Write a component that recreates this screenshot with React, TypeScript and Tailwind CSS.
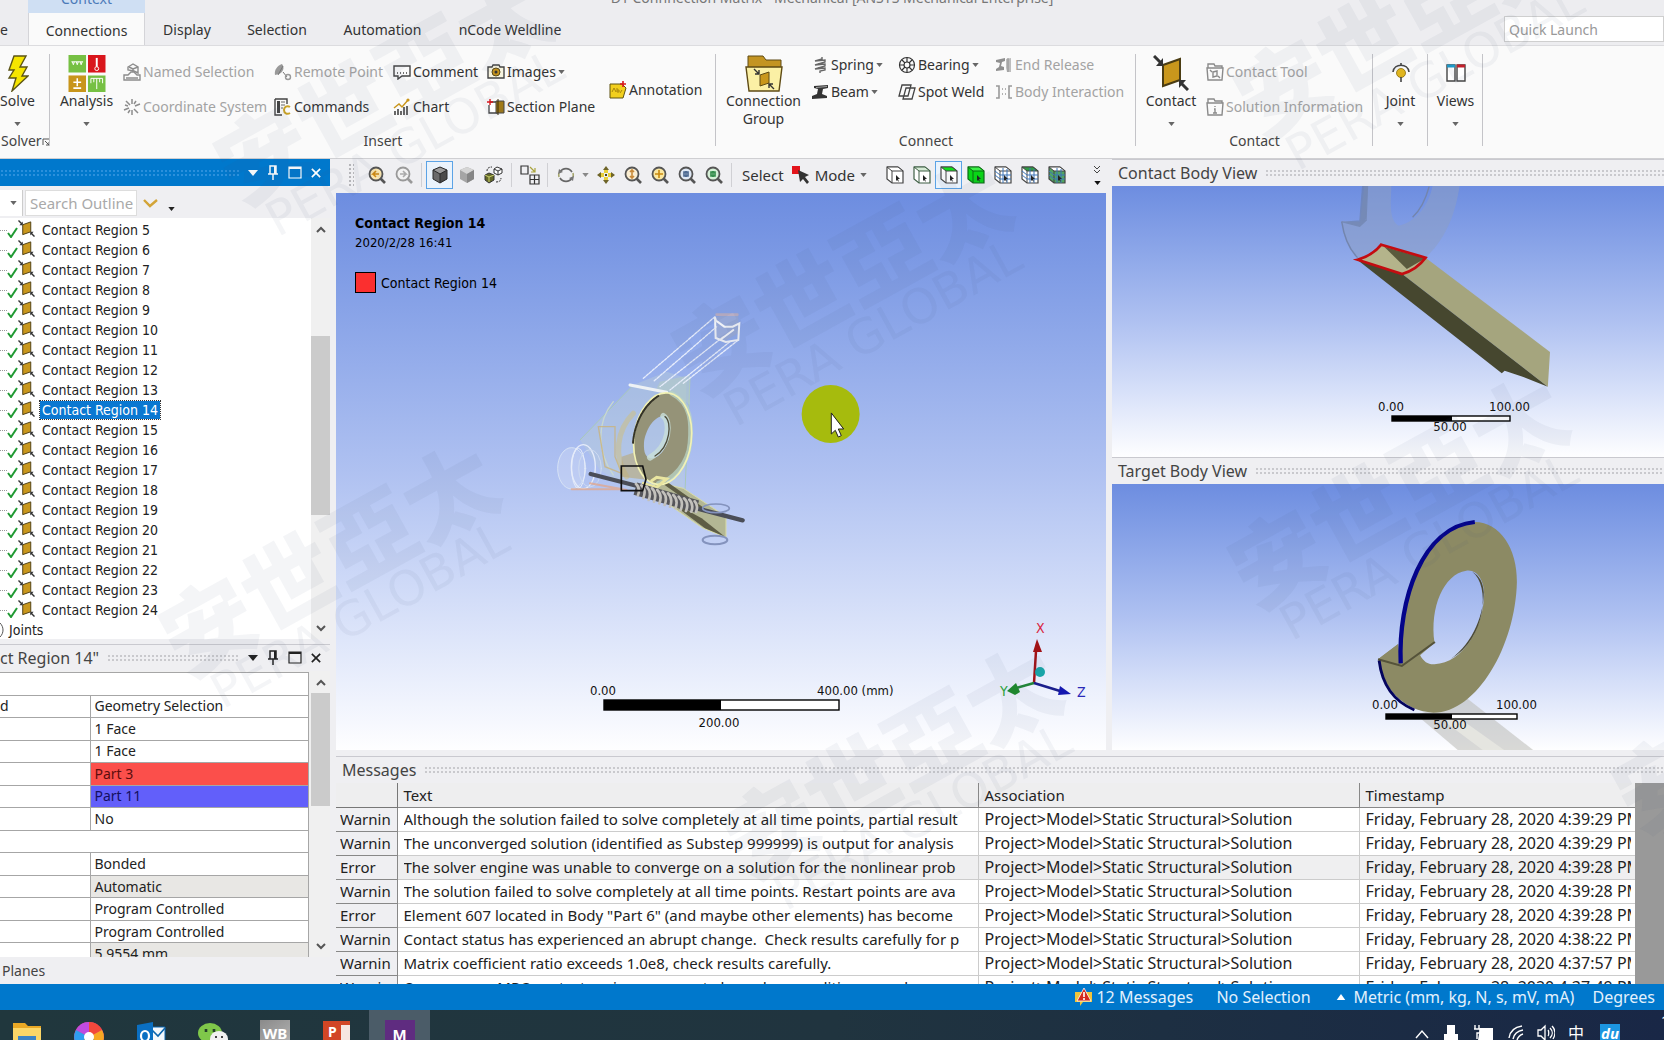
import React from 'react';
import clsx from 'clsx';

type IconProps = { className?: string };

const UI_FONT = 'font-["Noto_Sans","Open_Sans",sans-serif]';
const TAHOMA = 'font-["DejaVu_Sans_Condensed","DejaVu_Sans",sans-serif]';

/* ---------- icons ---------- */

const Caret: React.FC<IconProps> = ({ className = 'text-[#666]' }) => (
  <svg viewBox="0 0 8 5" className={clsx('h-[4px] w-[7px] shrink-0', className)} fill="currentColor">
    <path d="M0 0h8L4 5z" />
  </svg>
);

const BoltIcon = () => (
  <svg viewBox="0 0 22 37" className="h-[37px] w-[22px]">
    <path d="M7 1h12l-6 11h7l-5 9h6L5 36l4-13H2l5-8H2z" fill="#f6e500" stroke="#5b5416" strokeWidth="1.4" />
  </svg>
);

const AnalysisIcon = () => (
  <svg viewBox="0 0 38 38" className="h-[37px] w-[38px]">
    <path d="M0 0h18v18H0zM20 21h18v17H20z" fill="#76c043" />
    <path d="M20 0h18v18H20z" fill="#d9161c" />
    <path d="M0 21h18v17H0z" fill="#c8951a" />
    <path d="M3 7h12M4 7l1 3 1-3m2 0l1 3 1-3m2 0l1 3 1-3" stroke="#fff" fill="none" />
    <path d="M29 3v9" stroke="#fff" strokeWidth="2" />
    <circle cx="29" cy="14" r="2" fill="none" stroke="#fff" />
    <path d="M9 24v8M5 28h8M5 34h8" stroke="#fff" strokeWidth="1.6" />
    <path d="M23 24v5m3-5v4m3-4v11m3-11v4m3-4v5M23 24h12" stroke="#fff" fill="none" />
  </svg>
);

const NamedSelectionIcon = () => (
  <svg viewBox="0 0 18 18" className="size-[18px]" fill="none" stroke="#8c8c8c" strokeWidth="1.4">
    <path d="M1 12h4l3-3h3l3 3h3v5H1z" />
    <path d="M5 4l5-3 5 3v6l-4-2-6-1z" />
    <path d="M6 4l4 2 5-2M10 6v3M3 15h12" />
  </svg>
);

const CoordinateIcon = () => (
  <svg viewBox="0 0 18 18" className="size-[18px]" fill="none" stroke="#8c8c8c" strokeWidth="1.5">
    <path d="M9 1v5M9 12v5M1 12l5-2M12 8l5-2M3 3l4 4M11 11l4 4M2 7l3 1M13 3l-2 3M5 15l2-3" />
  </svg>
);

const RemotePointIcon = () => (
  <svg viewBox="0 0 18 18" className="size-[18px]">
    <path d="M1 12c-1-5 2-9 7-11 3 4 1 8-3 10z" fill="#999" />
    <path d="M4 12l5-9M9 9l4 5" stroke="#777" fill="none" />
    <circle cx="14" cy="14" r="2.5" fill="none" stroke="#999" strokeWidth="1.4" />
  </svg>
);

const CommandsIcon = () => (
  <svg viewBox="0 0 18 18" className="size-[18px]">
    <path d="M1 1h12v5M1 1v16h7" fill="none" stroke="#444" strokeWidth="1.4" />
    <path d="M3 3h3v12H3z" fill="#444" />
    <path d="M7 4h4M7 7h4M7 10h2" stroke="#666" />
    <path d="M16 9c-3-2-6 0-6 3s3 5 6 3" fill="none" stroke="#c9a227" strokeWidth="2" />
  </svg>
);

const CommentIcon = () => (
  <svg viewBox="0 0 18 16" className="h-4 w-[18px]" fill="none" stroke="#444" strokeWidth="1.4">
    <path d="M1 2h16v10H9l-4 3v-3H1z" />
    <path d="M4 9h1m2 0h1m2 0h1m2 0h1" />
  </svg>
);

const ChartIcon = () => (
  <svg viewBox="0 0 18 18" className="size-[18px]" fill="none">
    <path d="M2 17v-4M5 17v-6M8 17v-4M11 17V9M14 17V8" stroke="#444" strokeWidth="1.6" />
    <path d="M1 10l5-4 3 3 6-7" stroke="#c9951a" strokeWidth="1.4" />
    <circle cx="15" cy="2" r="1.6" fill="#c9951a" />
  </svg>
);

const CameraIcon = () => (
  <svg viewBox="0 0 18 16" className="h-4 w-[18px]">
    <path d="M1 3h4l1-2h6l1 2h4v11H1z" fill="#f7f4df" stroke="#444" strokeWidth="1.4" />
    <circle cx="9" cy="8" r="4" fill="#c9951a" stroke="#57481a" />
    <circle cx="9" cy="8" r="1.5" fill="#333" />
  </svg>
);

const SectionPlaneIcon = () => (
  <svg viewBox="0 0 18 16" className="h-4 w-[18px]">
    <path d="M3 3h7v11H2V6" fill="#fff" stroke="#444" strokeWidth="1.3" />
    <path d="M9 2h8v12H9z" fill="#a07a18" stroke="#444" />
    <path d="M11 0v16" stroke="#3a2c08" />
    <path d="M3 0v6M0 3h6" stroke="#d9161c" strokeWidth="1.4" />
  </svg>
);

const AnnotationIcon = () => (
  <svg viewBox="0 0 18 18" className="size-[18px]">
    <path d="M1 3h12l4 4-3 10H1z" fill="#f2cf1d" stroke="#5e5210" />
    <path d="M3 11l2-4 2 4m1-4v4h2V9H8m5 0l-2 3" fill="none" stroke="#a8860d" />
    <path d="M14 0v6M11 3h6" stroke="#d9161c" strokeWidth="1.6" />
  </svg>
);

const ConnectionGroupIcon = () => (
  <svg viewBox="0 0 38 37" className="h-[37px] w-[38px]">
    <path d="M3 13V1h15l3 4h15v8z" fill="#c39422" stroke="#5e4a14" />
    <path d="M1 12h36l-3 24H4z" fill="#fbf0a5" stroke="#5e4a14" strokeWidth="1.4" />
    <path d="M15 20l9-3v11l-9 3z" fill="#c9971c" stroke="#5e4a14" />
    <path d="M9 14l5 5m-4 0h4v-4M29 34l-5-5m4 0h-4v4" stroke="#333" fill="none" strokeWidth="1.4" />
  </svg>
);

const SpringIcon = () => (
  <svg viewBox="0 0 18 18" className="size-[18px]" fill="none" stroke="#666" strokeWidth="1.4">
    <path d="M11 1v2L4 5l10-1v2L4 9l10-1v2L4 13l10-1v2l-5 1v2" />
  </svg>
);

const BeamIcon = ({ className = 'text-[#333]' }: IconProps) => (
  <svg viewBox="0 0 18 16" className={clsx('h-4 w-[18px]', className)} fill="currentColor">
    <path d="M3 2l14-1v3l-5 1-1 5 5 2v2l-15 1v-3l5-2 1-5-4-1z" />
    <path d="M5 3.500L16 2.500" stroke="#bbb" strokeWidth=".8" />
  </svg>
);

const EndReleaseIcon = () => (
  <svg viewBox="0 0 18 16" className="h-4 w-[18px]" fill="#8f8f8f">
    <path d="M1 3l9-2v3l-3 1-1 4 3 1v3l-8 1v-2l3-2 1-4-4-1z" />
    <path d="M11 2l5-1v14h-4l-1-4z" fill="#bdbdbd" />
    <path d="M13 1v14" stroke="#8f8f8f" />
  </svg>
);

const BearingIcon = () => (
  <svg viewBox="0 0 18 18" className="size-[18px]" fill="none" stroke="#333" strokeWidth="1.2">
    <circle cx="9" cy="9" r="7.500" />
    <circle cx="9" cy="9" r="3" />
    <path d="M9 1.500V6M9 12v4.500M1.500 9H6M12 9h4.500M4 4l3 3M11 11l3 3M14 4l-3 3M7 11l-3 3" />
  </svg>
);

const SpotWeldIcon = () => (
  <svg viewBox="0 0 18 16" className="h-4 w-[18px]" fill="none" stroke="#444" strokeWidth="1.3">
    <path d="M4 1h9l-3 11H1zM8 4h9l-3 11H5z" />
  </svg>
);

const BodyInteractionIcon = () => (
  <svg viewBox="0 0 18 16" className="h-4 w-[18px]" fill="none" stroke="#999" strokeWidth="1.6">
    <path d="M1 2h3v12H1M17 2h-3v12h3M7 5h1m2 0h1M7 10h1m2 0h1" />
  </svg>
);

const ContactIcon = ({ className = 'h-[36px] w-[36px]' }: IconProps) => (
  <svg viewBox="0 0 36 36" className={className}>
    <path d="M10 10l17-6v21l-17 6z" fill="#c9971c" stroke="#4a3c12" strokeWidth="2" />
    <path d="M1 1l8 8M35 35l-8-8" stroke="#333" strokeWidth="3" />
    <path d="M10 3v8H3zM26 33v-8h7z" fill="#333" />
  </svg>
);

const ToolFolderIcon = () => (
  <svg viewBox="0 0 18 18" className="size-[18px]" fill="none" stroke="#8a8a8a" strokeWidth="1.4">
    <path d="M2 5V1h6l1 2h7v2M1 5h16l-1 12H2z" />
    <path d="M7 9l4-1v5l-4 1zM4 7l2 2M14 15l-2-2" />
  </svg>
);

const SolutionInfoIcon = () => (
  <svg viewBox="0 0 18 18" className="size-[18px]" fill="none" stroke="#8a8a8a" strokeWidth="1.4">
    <path d="M2 5V1h6l1 2h7v2M1 5h16l-1 12H2z" />
    <path d="M9 8v1M8 11h1v4M7 15h4" />
  </svg>
);

const JointIcon = () => (
  <svg viewBox="0 0 20 20" className="size-5">
    <path d="M2 9c1-9 15-9 16 0M10 0v3" fill="none" stroke="#444" strokeWidth="1.6" />
    <circle cx="10" cy="10" r="4.500" fill="#e0b51e" stroke="#8a6c0c" strokeWidth=".8" />
    <path d="M10 14v5" stroke="#444" strokeWidth="1.6" />
  </svg>
);

const ViewsIcon = () => (
  <svg viewBox="0 0 20 20" className="size-5" fill="#fff" strokeWidth="1.4">
    <path d="M1 2h8v16H1zM11 2h8v16h-8z" stroke="#444" />
    <path d="M1 3h8" stroke="#1e9bc9" strokeWidth="3" />
    <path d="M11 3h8" stroke="#c3202b" strokeWidth="3" />
  </svg>
);

const ZoomIcon: React.FC<{ ring?: string; fill: string; mark: string; d: string }> = ({
  ring = '#555',
  fill,
  mark,
  d,
}) => (
  <svg viewBox="0 0 18 18" className="size-[18px]" fill="none">
    <circle cx="8" cy="8" r="6.500" fill={fill} stroke={ring} strokeWidth="1.8" />
    <path d="M12.500 12.500L17 17" stroke={ring} strokeWidth="2.600" />
    <path d={d} stroke={mark} strokeWidth="1.6" />
  </svg>
);

const SolidCubeIcon: React.FC<{ light?: boolean }> = ({ light }) => (
  <svg viewBox="0 0 16 18" className="h-[18px] w-4">
    <path d="M8 1l7 3v9l-7 4-7-4V4z" fill={light ? '#a5a5a5' : '#6a6a6a'} />
    <path d="M8 1l7 3-7 4-7-4z" fill={light ? '#d5d5d5' : '#9a9a9a'} />
    <path d="M8 8l7-4v9l-7 4z" fill={light ? '#868686' : '#4a4a4a'} />
    {!light && <path d="M8 1l7 3v9l-7 4-7-4V4zM1 4l7 4 7-4M8 8v9" fill="none" stroke="#2a2a2a" />}
  </svg>
);

const ExplodeIcon = () => (
  <svg viewBox="0 0 20 20" className="size-5">
    <path d="M5 8l5 2v5l-5 3-4-3v-5z" fill="#63682a" stroke="#333" />
    <path d="M1 10l4 2 5-2M5 12v5" fill="none" stroke="#cdd36b" />
    <path d="M13 2l5 2v4l-4 2-4-2V4zM10 4l4 2 4-2M14 6v4" fill="#fff" stroke="#333" />
    <path d="M3 6c0-3 2-4 5-4M12 17c3 0 5-1 5-4" fill="none" stroke="#333" strokeDasharray="2 1" />
  </svg>
);

const TileIcon = () => (
  <svg viewBox="0 0 20 20" className="size-5" fill="none" stroke="#333" strokeWidth="1.2">
    <path d="M1 1h7v8H1zM10 10h9v9h-9zM10 14.500h9M14.500 10v9" />
    <path d="M10 2l5 5m-4 0h4V3" stroke="#a9a33c" />
  </svg>
);

const RotateIcon = () => (
  <svg viewBox="0 0 18 18" className="size-[18px]" fill="none" strokeWidth="1.6">
    <path d="M3 6a7 7 0 0 1 12 0M15 12a7 7 0 0 1-12 0" stroke="#666" />
    <path d="M2 7a7 7 0 0 0 0 4M16 7a7 7 0 0 1 0 4" stroke="#a5a56c" />
    <path d="M1 8l1-5 4 3zM17 10l-1 5-4-3z" fill="#777" stroke="none" />
  </svg>
);

const PanIcon = () => (
  <svg viewBox="0 0 18 18" className="size-[18px]">
    <path d="M9 0l3 4H6zM9 18l3-4H6zM0 9l4-3v6zM18 9l-4-3v6z" fill="#6e6428" />
    <path d="M7 4h4v3H7zM7 11h4v3H7zM4 7h3v4H4zM11 7h3v4h-3z" fill="#e9cf3a" />
    <path d="M8 8h2v2H8z" fill="#4a4320" />
  </svg>
);

const ModeIcon = () => (
  <svg viewBox="0 0 18 18" className="size-[18px]">
    <path d="M0 0h8v8H0z" fill="#e3141b" />
    <path d="M6 4l11 5-4 2 4 5-2 2-4-5-3 3z" fill="#333" />
  </svg>
);

const SelectCubeIcon: React.FC<{ face?: string; top?: string; edge?: string; mesh?: boolean }> = ({
  face = '#fff',
  top = '#fff',
  edge = '#444',
  mesh,
}) => (
  <svg viewBox="0 0 18 18" className="size-[18px]" fill="none">
    <path d="M1 1h11l5 4v12H6l-5-4z" fill={face} stroke={edge} strokeWidth="1.2" />
    <path d="M1 1h11l5 4H6z" fill={top} stroke={edge} />
    <path d="M6 5v12" stroke={edge} />
    {mesh && <path d="M9 2v15M13 3v14M1 5l5 4h11M1 9l5 4h11" stroke="#3d74b8" />}
    <path d="M10 9l4 4h-2l1 3-2-2-1 1z" fill="#222" />
  </svg>
);

const PinIcon = () => (
  <svg viewBox="0 0 12 16" className="h-4 w-3" fill="none" stroke="currentColor" strokeWidth="1.5">
    <path d="M3 1h6v8H3zM1 9h10M6 9v6" />
    <path d="M8 1v8" strokeWidth="2" />
  </svg>
);

const CheckIcon = () => (
  <svg viewBox="0 0 11 12" className="mt-1 h-3 w-[11px]" fill="none">
    <path d="M1 7l3 4 6-9" stroke="#219a34" strokeWidth="2" />
  </svg>
);

const ChevronIcon: React.FC<{ down?: boolean; className?: string }> = ({ down, className = 'text-[#555]' }) => (
  <svg viewBox="0 0 10 7" className={clsx('h-[7px] w-[10px]', className)} fill="none" stroke="currentColor" strokeWidth="2">
    <path d={down ? 'M1 1l4 4 4-4' : 'M1 6l4-4 4 4'} />
  </svg>
);

/* ---------- ribbon ---------- */

interface SmallButtonProps {
  icon: React.ReactNode;
  label: string;
  disabled?: boolean;
  menu?: boolean;
  compact?: boolean;
}

const SmallButton: React.FC<SmallButtonProps> = ({ icon, label, disabled, menu, compact }) => (
  <button
    type="button"
    disabled={disabled}
    className={clsx(
      'flex items-center gap-[2px] text-[14px] whitespace-nowrap',
      compact ? 'h-[27px]' : 'h-[35px]',
      disabled ? 'text-[#a3a3a3]' : 'text-[#333]'
    )}
  >
    {icon}
    <span>{label}</span>
    {menu && <Caret />}
  </button>
);

const BigButton: React.FC<{ icon: React.ReactNode; label: string; menu?: boolean; className: string }> = ({
  icon,
  label,
  menu = true,
  className,
}) => (
  <button type="button" className={clsx('flex shrink-0 flex-col items-center text-[14px] text-[#333]', className)}>
    <span className="flex h-[38px] items-center">{icon}</span>
    <span className="leading-[18px]">{label}</span>
    {menu && <Caret className="mt-3 text-[#666]" />}
  </button>
);

interface RibbonGroupProps {
  label: string;
  className: string;
  launcher?: boolean;
  children: React.ReactNode;
}

const RibbonGroup: React.FC<RibbonGroupProps> = ({ label, className, launcher, children }) => (
  <section className={clsx('relative flex shrink-0 flex-col pt-2', className)}>
    <div className="flex flex-1">{children}</div>
    <h2 className={clsx('flex h-[26px] text-[14px] leading-[18px] text-[#444]', launcher ? 'pl-px' : 'justify-center')}>
      {label}
      {launcher && (
        <svg viewBox="0 0 8 8" className="mt-[6px] size-2 shrink-0" fill="none" stroke="#555">
          <path d="M1 7V1h6M3 3l4 4M7 4v3H4" />
        </svg>
      )}
    </h2>
    <i className="absolute top-2 right-0 bottom-3 w-px bg-[#c4c4c8]" />
  </section>
);

const Ribbon = () => (
  <div className="flex h-[113px] shrink-0 overflow-hidden border-b border-[#cfcfd2] bg-[#fafafa]">
    <RibbonGroup label="Solver" launcher className="w-[50px]">
      <BigButton icon={<BoltIcon />} label="Solve" className="w-[35px]" />
    </RibbonGroup>
    <RibbonGroup label="Insert" className="w-[666px]">
      <BigButton icon={<AnalysisIcon />} label="Analysis" className="w-[73px]" />
      <div className="w-[151px]">
        <SmallButton icon={<NamedSelectionIcon />} label="Named Selection" disabled />
        <SmallButton icon={<CoordinateIcon />} label="Coordinate System" disabled />
      </div>
      <div className="w-[119px]">
        <SmallButton icon={<RemotePointIcon />} label="Remote Point" disabled />
        <SmallButton icon={<CommandsIcon />} label="Commands" />
      </div>
      <div className="w-[94px]">
        <SmallButton icon={<CommentIcon />} label="Comment" />
        <SmallButton icon={<ChartIcon />} label="Chart" />
      </div>
      <div className="w-[122px]">
        <SmallButton icon={<CameraIcon />} label="Images" menu />
        <SmallButton icon={<SectionPlaneIcon />} label="Section Plane" />
      </div>
      <div className="flex h-[71px] items-center">
        <SmallButton icon={<AnnotationIcon />} label="Annotation" />
      </div>
    </RibbonGroup>
    <RibbonGroup label="Connect" className="w-[420px]">
      <BigButton icon={<ConnectionGroupIcon />} label="Connection Group" menu={false} className="w-[95px]" />
      <div className="-mt-[3px] w-[87px]">
        <SmallButton icon={<SpringIcon />} label="Spring" menu compact />
        <SmallButton icon={<BeamIcon />} label="Beam" menu compact />
      </div>
      <div className="-mt-[3px] w-[97px]">
        <SmallButton icon={<BearingIcon />} label="Bearing" menu compact />
        <SmallButton icon={<SpotWeldIcon />} label="Spot Weld" compact />
      </div>
      <div className="-mt-[3px]">
        <SmallButton icon={<EndReleaseIcon />} label="End Release" disabled compact />
        <SmallButton icon={<BodyInteractionIcon />} label="Body Interaction" disabled compact />
      </div>
    </RibbonGroup>
    <RibbonGroup label="Contact" className="w-[237px]">
      <BigButton icon={<ContactIcon />} label="Contact" className="w-[70px]" />
      <div>
        <SmallButton icon={<ToolFolderIcon />} label="Contact Tool" disabled />
        <SmallButton icon={<SolutionInfoIcon />} label="Solution Information" disabled />
      </div>
    </RibbonGroup>
    <RibbonGroup label="" className="w-[55px]">
      <BigButton icon={<JointIcon />} label="Joint" className="w-full" />
    </RibbonGroup>
    <RibbonGroup label="" className="w-[55px]">
      <BigButton icon={<ViewsIcon />} label="Views" className="w-full" />
    </RibbonGroup>
  </div>
);

const tabs = [
  { label: 'Display', width: 'w-[84px]' },
  { label: 'Selection', width: 'w-[96px]' },
  { label: 'Automation', width: 'w-[115px]' },
  { label: 'nCode Weldline', width: 'w-[140px]' },
];

const TabStrip = () => (
  <header className="relative flex h-[46px] shrink-0 items-end overflow-hidden border-b border-[#dcdcdf] bg-[#ededf0] text-[14px] text-[#333]">
    <p className="absolute -top-3 left-0 w-full text-center leading-5 text-[#777]">
      D1 Connnection Matrix - Mechanical [ANSYS Mechanical Enterprise]
    </p>
    <button type="button" className="h-[31px] w-[28px] pr-5 text-right">e</button>
    <div className="relative flex h-full w-[117px] flex-col">
      <span className="flex h-[13px] items-end justify-center overflow-hidden bg-[#cfdff3] pb-[5px] leading-[18px] text-[#4c7ab8]">
        Context
      </span>
      <button type="button" className="flex-1 border-x border-[#d4d4d8] bg-[#fafafa] pt-[2px]">Connections</button>
    </div>
    {tabs.map((tab) => (
      <button key={tab.label} type="button" className={clsx('h-[31px]', tab.width)}>
        {tab.label}
      </button>
    ))}
    <input
      type="text"
      aria-label="Quick Launch"
      placeholder="Quick Launch"
      className="mb-[3px] ml-auto h-[26px] w-[160px] border border-[#cfcfcf] bg-white px-1 placeholder:text-[#999]"
    />
  </header>
);

/* ---------- panels ---------- */

const PanelHeader: React.FC<{ title?: string; active?: boolean; controls?: boolean }> = ({ title, active, controls }) => (
  <div
    className={clsx(
      'flex h-[27px] shrink-0 items-center text-[16px]',
      active ? 'bg-[#0078cc] text-white' : 'border-t border-[#c9c9cf] bg-[#efeff2] pb-px text-[#444]'
    )}
  >
    {title && (
      <h3 className={clsx('mr-2 leading-5 whitespace-nowrap', controls ? '' : 'ml-[6px]')}>{title}</h3>
    )}
    <i
      className={clsx(
        'h-2 flex-1 bg-[length:4px_4px]',
        active
          ? 'bg-[radial-gradient(#2b90dc_1px,transparent_1px)]'
          : 'bg-[radial-gradient(#c9c9cd_1px,transparent_1px)]'
      )}
    />
    {controls && (
      <div className={clsx('flex items-center gap-[9px] pr-[9px] pl-2', active ? 'text-white' : 'text-[#222]')}>
        <button type="button" aria-label="Window position">
          <svg viewBox="0 0 10 6" className="h-[6px] w-[10px]" fill="currentColor">
            <path d="M0 0h10L5 6z" />
          </svg>
        </button>
        <button type="button" aria-label="Auto hide"><PinIcon /></button>
        <button type="button" aria-label="Maximize">
          <svg viewBox="0 0 14 13" className="h-[13px] w-[14px]" fill="none" stroke="currentColor">
            <path d="M1 1h12v11H1z" strokeWidth="1.2" />
            <path d="M1 2h12" strokeWidth="2" />
          </svg>
        </button>
        <button type="button" aria-label="Close">
          <svg viewBox="0 0 12 12" className="h-3 w-[10px]" fill="none" stroke="currentColor" strokeWidth="2">
            <path d="M1 1l10 10M11 1L1 11" />
          </svg>
        </button>
      </div>
    )}
  </div>
);

const ScrollBar: React.FC<{ thumb: string }> = ({ thumb }) => (
  <div className="flex w-[19px] shrink-0 flex-col items-center bg-[#f0f0f0] pt-px">
    <span className="flex h-[21px] items-center"><ChevronIcon /></span>
    <div className="w-full flex-1">
      <div className={clsx('w-full bg-[#cbcbcb]', thumb)} />
    </div>
    <span className="flex h-[21px] items-center"><ChevronIcon down /></span>
  </div>
);

const regions = Array.from({ length: 20 }, (_, i) => i + 5);

const OutlinePanel = () => (
  <section className="flex min-h-0 flex-1 flex-col">
    <PanelHeader active controls />
    <div className="flex h-8 shrink-0 items-center bg-[#efeff2] pt-[2px]">
      <button type="button" aria-label="Filter type" className="flex h-[26px] w-[23px] items-center justify-end border-r border-[#ccc] bg-white pr-[5px]">
        <Caret />
      </button>
      <input
        type="text"
        aria-label="Search Outline"
        placeholder="Search Outline"
        className="ml-[2px] h-[26px] w-[112px] border border-[#ddd] bg-white pl-1 text-[15px] placeholder:text-[#a9a9a9]"
      />
      <button type="button" aria-label="Expand" className="ml-[6px]">
        <svg viewBox="0 0 15 9" className="h-[9px] w-[15px]" fill="none" stroke="#d3a437" strokeWidth="2.400">
          <path d="M1 1l6 6 7-6" />
        </svg>
      </button>
      <Caret className="mt-3 ml-[10px] text-[#222]" />
    </div>
    <div className="flex min-h-0 flex-1">
      <ul className={clsx('flex-1 overflow-hidden bg-white pt-[2px] text-[14px] text-[#222]', TAHOMA)}>
        {regions.map((n) => (
          <li key={n} className="flex h-5 items-center">
            <i className="h-px w-[7px] shrink-0 border-t border-dotted border-[#999]" />
            <CheckIcon />
            <ContactIcon className="mb-1 h-[17px] w-[17px]" />
            <span
              className={clsx(
                'ml-[5px] px-[2px] leading-[18px]',
                n === 14 && 'bg-[#0a78d1] text-white outline-1 outline-dotted outline-[#333]'
              )}
            >
              Contact Region {n}
            </span>
          </li>
        ))}
        <li className="flex h-5 items-center">
          <svg viewBox="0 0 4 14" className="h-[14px] w-1" fill="none" stroke="#555">
            <path d="M0 0c4 4 4 10 0 14" />
          </svg>
          <span className="ml-[5px]">Joints</span>
        </li>
      </ul>
      <ScrollBar thumb="mt-[96px] h-[179px]" />
    </div>
  </section>
);

interface DetailRow {
  name?: string;
  value?: string;
  tone?: string;
}

const details: DetailRow[] = [
  {},
  { name: 'd', value: 'Geometry Selection' },
  { value: '1 Face' },
  { value: '1 Face' },
  { value: 'Part 3', tone: 'bg-[#fb4f4b] text-[#5b0d0d]' },
  { value: 'Part 11', tone: 'bg-[#625ffa] text-[#14105e]' },
  { value: 'No' },
  {},
  { value: 'Bonded' },
  { value: 'Automatic', tone: 'bg-[#e8e7e4]' },
  { value: 'Program Controlled' },
  { value: 'Program Controlled' },
  { value: '5.9554 mm', tone: 'bg-[#e8e7e4]' },
];

const DetailsPanel = () => (
  <section className="mt-[5px] flex h-[340px] shrink-0 flex-col">
    <PanelHeader title={'ct Region 14"'} controls />
    <div className="flex h-[286px] overflow-hidden">
      <div className="flex-1 overflow-hidden bg-[#f0f0f0] pt-px pr-[2px]">
        <table className="h-[294px] w-full border-collapse bg-white text-[14px] leading-[18px] text-[#222]">
          <tbody>
            {details.map((row, i) =>
              row.value ? (
                <tr key={i}>
                  <td className="w-[90px] border border-l-0 border-[#a6a6a6] p-0">{row.name}</td>
                  <td className={clsx('border border-[#a6a6a6] py-0 pr-0 pl-1', row.tone)}>{row.value}</td>
                </tr>
              ) : (
                <tr key={i}>
                  <td colSpan={2} className="border border-l-0 border-[#a6a6a6] p-0">&nbsp;</td>
                </tr>
              )
            )}
          </tbody>
        </table>
      </div>
      <ScrollBar thumb="h-[113px]" />
    </div>
    <div className="flex flex-1 items-center bg-[#efeff2] pl-[2px] text-[14px] text-[#444]">Planes</div>
  </section>
);

/* ---------- graphics ---------- */

const ToolButton: React.FC<{ label: string; active?: boolean; children: React.ReactNode }> = ({
  label,
  active,
  children,
}) => (
  <button
    type="button"
    aria-label={label}
    className={clsx(
      'flex h-7 w-[27px] shrink-0 items-center justify-center border',
      active ? 'border-[#5ba3e6] bg-[#eaf3fc]' : 'border-transparent'
    )}
  >
    {children}
  </button>
);

const Divider = () => <i className="mx-1 h-6 w-px shrink-0 bg-[#d0d0d4]" />;

const GraphicsToolbar = () => (
  <div className="flex h-[34px] shrink-0 items-center bg-[#efeff2] pb-[2px] pl-3 text-[15px] text-[#333]">
    <i className="mr-[9px] h-6 w-[6px] shrink-0 bg-[radial-gradient(#b5b5b9_1px,transparent_1px)] bg-[length:4px_4px]" />
    <ToolButton label="Previous view"><ZoomIcon fill="#fbe7b0" mark="#d08a10" d="M11 8H5l3-3M5 8l3 3" /></ToolButton>
    <ToolButton label="Next view"><ZoomIcon ring="#999" fill="#f2f2f2" mark="#aaa" d="M5 8h6L8 5M11 8l-3 3" /></ToolButton>
    <Divider />
    <ToolButton label="Shaded with edges" active><SolidCubeIcon /></ToolButton>
    <ToolButton label="Shaded"><SolidCubeIcon light /></ToolButton>
    <ToolButton label="Explode"><ExplodeIcon /></ToolButton>
    <Divider />
    <ToolButton label="Viewports"><TileIcon /></ToolButton>
    <Divider />
    <ToolButton label="Rotate"><RotateIcon /></ToolButton>
    <span className="flex w-[13px] justify-center"><Caret className="text-[#888]" /></span>
    <ToolButton label="Pan"><PanIcon /></ToolButton>
    <ToolButton label="Zoom"><ZoomIcon fill="#fbeed2" mark="#c98a3a" d="M8 4v8M6 6l2-2 2 2M6 10l2 2 2-2" /></ToolButton>
    <ToolButton label="Box zoom"><ZoomIcon fill="#fbe7a0" mark="#c98a10" d="M8 4v8M4 8h8" /></ToolButton>
    <ToolButton label="Fit"><ZoomIcon fill="#dfe8f5" mark="#47658f" d="M6 6h4v4H6zM8 5v6" /></ToolButton>
    <ToolButton label="Fit selection"><ZoomIcon fill="#d6f0d8" mark="#2f8a48" d="M6 6h4v4H6zM8 5v6" /></ToolButton>
    <Divider />
    <span className="ml-[6px]">Select</span>
    <button type="button" className="mr-[14px] ml-2 flex items-center gap-[5px]">
      <ModeIcon />
      Mode
      <Caret />
    </button>
    <ToolButton label="Vertex"><SelectCubeIcon /></ToolButton>
    <ToolButton label="Edge"><SelectCubeIcon top="#d5ead5" edge="#3f5f45" /></ToolButton>
    <ToolButton label="Face" active><SelectCubeIcon top="#0fe01c" /></ToolButton>
    <ToolButton label="Body"><SelectCubeIcon face="#09d516" top="#3bf047" edge="#0c6a14" /></ToolButton>
    <ToolButton label="Node"><SelectCubeIcon mesh /></ToolButton>
    <ToolButton label="Element face"><SelectCubeIcon mesh top="#2f9a45" /></ToolButton>
    <ToolButton label="Element"><SelectCubeIcon mesh face="#51a562" /></ToolButton>
    <button type="button" aria-label="More tools" className="mr-[5px] ml-auto flex flex-col items-center gap-[7px] text-[#444]">
      <svg viewBox="0 0 8 8" className="size-2" fill="none" stroke="currentColor">
        <path d="M1 0l3 3 3-3M1 4l3 3 3-3" />
      </svg>
      <Caret className="text-[#111]" />
    </button>
  </div>
);

const SKY = 'bg-linear-to-b from-[#6d8de0] via-[#afc1f1] to-[#fefeff]';

interface ScaleProps {
  x: number;
  y: number;
  width: number;
  mid: number;
  height: number;
  max: string;
  half: string;
  maxX: number;
  drop: number;
}

const ScaleBar: React.FC<ScaleProps> = ({ x, y, width, mid, height, max, half, maxX, drop }) => (
  <g fontSize="13" fill="#111">
    <rect x={x} y={y} width={width} height={height} fill="#fff" stroke="#000" strokeWidth="1.4" />
    <rect x={x} y={y} width={mid} height={height} fill="#000" />
    <text x={x - 1} y={y - 5} textAnchor="middle">0.00</text>
    <text x={maxX} y={y - 5}>{max}</text>
    <text x={x + mid - 2} y={y + drop} textAnchor="middle">{half}</text>
  </g>
);

const Assembly = () => (
  <g transform="translate(194 97) scale(.3333)" fill="none" strokeLinecap="round">
    {/* translucent housing */}
    <path d="M310 285L150 450l60 90 100 65 150 10 10-350-60-20z" fill="#bcd0d8" fillOpacity=".4" />
    <path d="M310 285l-160 165M480 265l-15 340" stroke="#a9c9b8" strokeWidth="3" />
    <path d="M390 275l90-20v90l-30-20-70-30z" fill="#b4cbc4" fillOpacity=".6" />
    <path d="M250 335c-50 60-50 150 0 220" stroke="#c9d8d0" strokeWidth="4" />
    <path d="M205 410h50v90l20 50-50-20z" stroke="#c9b37c" strokeWidth="4" opacity=".8" />
    <path d="M310 370c-50 50-60 130-20 190" stroke="#cdbf83" strokeWidth="16" opacity=".55" />
    {/* arm */}
    <path d="M555 80L340 265M560 110L370 275M580 140L390 290M600 155L420 300M625 150L460 280" stroke="#e6ecfb" strokeWidth="4" strokeDasharray="8 4" />
    <path d="M555 82l70-12v60l-40 22-28-8z" fill="#9fa9c6" fillOpacity=".5" />
    <path d="M555 82l2 62 30 12 38-6 3-50-20 10h-25l-25-18zM570 150l40-30" stroke="#f0f2f7" strokeWidth="6" />
    <path d="M560 74h62" stroke="#b9aec4" strokeWidth="8" />
    <path d="M300 285l110 22" stroke="#eef2f5" strokeWidth="9" />
    {/* left boss */}
    <ellipse cx="125" cy="535" rx="42" ry="62" stroke="#d6e2f5" strokeWidth="3" fill="#d6e0f5" fillOpacity=".35" />
    <ellipse cx="160" cy="530" rx="36" ry="66" stroke="#e6ecfa" strokeWidth="4" />
    <ellipse cx="145" cy="535" rx="20" ry="60" stroke="#e6ecfa" strokeWidth="3" />
    <ellipse cx="180" cy="535" rx="34" ry="56" stroke="#cddaf0" strokeWidth="3" />
    <path d="M125 598h150M180 580l110 20" stroke="#e0a890" strokeWidth="6" opacity=".8" />
    <path d="M275 500l60-20 20 90-80-10z" fill="#b9a978" fillOpacity=".6" />
    {/* bracket below the ring */}
    <path d="M370 575l90 20 128 85v62l-70-28-130-90z" fill="#b3b794" stroke="#d9dca8" strokeWidth="3" />
    <path d="M425 640l100 75 60 25-70-55-90-50z" fill="#5e5d45" />
    <path d="M400 575l120 85" stroke="#5e5d45" strokeWidth="12" />
    {/* ring */}
    <path
      fillRule="evenodd"
      fill="#959378"
      d="M402 310c48-8 80 40 84 105 3 80-44 162-98 166-48 2-78-50-78-118 2-76 42-146 92-153zM398 378c-30 4-52 46-56 80-2 34 8 50 28 46 30-6 48-50 50-84 0-28-8-44-22-42z"
    />
    <path d="M400 378c22 14 22 90-40 125" stroke="#c9e0d9" strokeWidth="18" opacity=".8" />
    <path d="M405 380c22 16 16 90-30 118" stroke="#4d4c3a" strokeWidth="4" />
    <path d="M425 310c60 30 60 90 55 150s-50 110-95 120" stroke="#b9d4c6" strokeWidth="14" opacity=".75" />
    <ellipse cx="398" cy="446" rx="86" ry="138" transform="rotate(7 398 446)" stroke="#f2f2b4" strokeWidth="5" />
    <path d="M385 318c-44 28-72 84-76 142" stroke="#333226" strokeWidth="6" strokeDasharray="9 3" />
    <path d="M340 580l40 12 30-25-30-5-15 10" stroke="#e9e5a0" strokeWidth="9" />
    {/* spring and rod */}
    <path d="M182 552l140 36" stroke="#4a4d57" strokeWidth="13" />
    <path d="M500 655l138 36" stroke="#4a4d57" strokeWidth="13" />
    <path d="M316 596l186 54" stroke="#55555a" strokeWidth="38" strokeLinecap="butt" />
    <path
      d="M318 582q14 12 6 34M334 586q16 14 6 38M350 590q16 16 6 40M366 595q16 16 6 40M382 600q16 16 6 40M398 605q16 16 6 40M414 610q16 16 6 40M430 615q16 16 6 40M446 620q16 16 6 40M462 625q16 14 6 38M478 629q14 14 6 36M494 634q12 12 4 32"
      stroke="#c3c1bc"
      strokeWidth="8"
    />
    <ellipse cx="558" cy="655" rx="40" ry="13" stroke="#8493bd" strokeWidth="5" />
    <ellipse cx="555" cy="750" rx="37" ry="13" stroke="#8493bd" strokeWidth="6" />
    <path d="M274 528h64l10 40-10 34h-64z" stroke="#111" strokeWidth="5" />
    {/* pointer highlight */}
    <circle cx="902" cy="372" r="87" fill="#a6bb0d" />
    <path d="M904 370v62l12-11 9 20 9-4-9-20h15z" fill="#fff" stroke="#222" strokeWidth="3" />
  </g>
);

const Triad = () => (
  <g strokeWidth="2.500" fontSize="14">
    <path d="M698 490l2-32" stroke="#a11216" />
    <path d="M701 446l5 13h-9z" fill="#a11216" />
    <path d="M698 490l-18 5" stroke="#23863a" />
    <path d="M671 498l9-8 4 9-5 3z" fill="#1c8a2a" />
    <path d="M698 490l26 8" stroke="#1b1f8c" />
    <path d="M735 501l-11-8-2 9z" fill="#1518b0" />
    <circle cx="704" cy="479" r="5" fill="#19a5a8" />
    <text x="700" y="440" fill="#d92440">X</text>
    <text x="664" y="503" fill="#2aa637">Y</text>
    <text x="741" y="504" fill="#2a2ab8">Z</text>
  </g>
);

const MainView = () => (
  <div className={clsx('relative min-h-0 flex-1 overflow-hidden', SKY, TAHOMA)}>
    <svg viewBox="0 0 770 557" preserveAspectRatio="xMidYMid slice" className="absolute inset-0 size-full">
      <Assembly />
      <ScaleBar x={268} y={507} width={235} mid={117} height={10} max="400.00 (mm)" half="200.00" maxX={481} drop={27} />
      <Triad />
    </svg>
    <div className="relative pt-5 pl-[19px] text-[14px] leading-5 text-black">
      <p className="font-bold">Contact Region 14</p>
      <p className="text-[13px] leading-5">2020/2/28 16:41</p>
      <p className="mt-[19px] flex items-center gap-[5px]">
        <i className="size-[21px] border border-black bg-[#fb2f2f]" />
        Contact Region 14
      </p>
    </div>
  </div>
);

const ContactBodyView = () => (
  <div className={clsx('min-h-0 flex-[271] overflow-hidden', SKY, TAHOMA)}>
    <svg viewBox="0 0 552 271" preserveAspectRatio="xMidYMid slice" className="size-full">
      <g transform="translate(-12 -16) scale(.3597 .3333)">
        <path d="M735 45l-12 112-52-4c6 50 24 90 52 116l56-48 126 42c60-60 85-140 95-218h-75c-8 50-40 110-95 122-30-20-20-80-20-122z" fill="#8c9fc4" opacity=".55" />
        <path d="M730 48l-8 108 18-10 4-98zM672 155l50 14 20-20" fill="#6c7fa5" opacity=".6" stroke="#6c7fa5" strokeWidth="3" />
        <path d="M672 155c6 44 20 82 44 108M915 50c-10 40-24 70-46 92" fill="none" stroke="#7385ad" strokeWidth="4" />
        <path d="M905 263l346 283-6 104-405-338z" fill="#a5a57e" />
        <path d="M716 270l124 42 405 338-70-30-50-18-8 8z" fill="#46472f" />
        <path d="M782 224l123 39c-15 22-38 40-65 49l-120-43c26-8 48-24 62-45z" fill="#b4b48b" />
        <path d="M790 230l115 35-52 32z" fill="#5a5a3d" />
        <path d="M782 224l123 39c-15 22-38 40-65 49l-124-43c28-8 50-24 66-45z" fill="none" stroke="#c40c10" strokeWidth="8" />
      </g>
      <ScaleBar x={280} y={230} width={118} mid={60} height={5} max="100.00" half="50.00" maxX={377} drop={15} />
    </svg>
  </div>
);

const TargetBodyView = () => (
  <div className={clsx('min-h-0 flex-[266] overflow-hidden', SKY, TAHOMA)}>
    <svg viewBox="0 0 552 266" preserveAspectRatio="xMidYMid slice" className="size-full">
      <g transform="translate(-12 -24) scale(.3597 .3333)">
        <path d="M1020 715l190 160h-210l-120-110z" fill="#b9b9b4" opacity=".55" />
        <path d="M980 760l150 115h-60l-130-105z" fill="#e8e8e2" opacity=".8" />
        <path
          fillRule="evenodd"
          fill="#8c8a64"
          d="M832 612c-8-180 60-420 210-426 70 0 118 80 117 180-4 190-110 392-232 392-80-4-140-70-154-160l56-46zM1018 332c-62 10-102 110-88 216l-40 38c10 20 22 28 40 27 80-4 136-110 138-210 0-40-18-76-50-71z"
        />
        <path d="M1035 335c50 40 40 200-60 262 66-50 92-140 92-200-2-30-12-50-32-62z" fill="#4d4b34" />
        <path d="M773 598l56-46 4 60 8 8z" fill="#8c8a64" />
        <path d="M773 598l66 20 92-72" fill="none" stroke="#55533a" strokeWidth="6" />
        <path d="M836 610c-8-190 60-410 206-424" fill="none" stroke="#04048a" strokeWidth="12" />
        <path d="M776 602c8 70 40 122 98 148" fill="none" stroke="#04045e" strokeWidth="8" />
      </g>
      <ScaleBar x={274} y={230} width={131} mid={66} height={5} max="100.00" half="50.00" maxX={384} drop={15} />
    </svg>
  </div>
);

/* ---------- messages ---------- */

const PATH = 'Project>Model>Static Structural>Solution';

const messages = [
  ['Warnin', 'Although the solution failed to solve completely at all time points, partial result', '4:39:29'],
  ['Warnin', 'The unconverged solution (identified as Substep 999999) is output for analysis', '4:39:29'],
  ['Error', 'The solver engine was unable to converge on a solution for the nonlinear prob', '4:39:28'],
  ['Warnin', 'The solution failed to solve completely at all time points. Restart points are ava', '4:39:28'],
  ['Error', 'Element 607 located in Body "Part 6" (and maybe other elements) has become', '4:39:28'],
  ['Warnin', 'Contact status has experienced an abrupt change.  Check results carefully for p', '4:38:22'],
  ['Warnin', 'Matrix coefficient ratio exceeds 1.0e8, check results carefully.', '4:37:57'],
  ['Warnin', 'One or more MPC contact regions or remote boundary conditions may have', '4:37:49'],
];

const MessagesPanel = () => (
  <section className="mt-[6px] flex h-[228px] shrink-0 flex-col overflow-hidden">
    <PanelHeader title="Messages" />
    <div className="flex min-h-0 flex-1 overflow-hidden bg-[#999]">
      <div className="flex-1 overflow-hidden">
        <table className="w-full table-fixed border-collapse bg-white text-[15px] text-[#222]">
          <thead>
            <tr className="h-6 bg-[#eeeeef] text-left leading-[22px]">
              <th className="w-[61px] border-r border-b border-[#777] p-0"><span className="sr-only">Type</span></th>
              <th className="w-[581px] border-r border-b border-[#888] py-0 pr-0 pl-[6px] font-normal">Text</th>
              <th className="w-[381px] border-r border-b border-[#888] py-0 pr-0 pl-[6px] font-normal">Association</th>
              <th className="border-b border-[#888] py-0 pr-0 pl-[6px] font-normal">Timestamp</th>
            </tr>
          </thead>
          <tbody>
            {messages.map(([type, text, time], i) => (
              <tr key={i} className={clsx('h-6 leading-[22px]', i === 2 && 'bg-[#efeff0]')}>
                <td className="border-r border-b border-[#888] bg-[#efeff2] py-0 pr-0 pl-1">
                  <div className="h-[23px] overflow-hidden whitespace-nowrap">{type}</div>
                </td>
                <td className="border-r border-b border-[#ccc] py-0 pr-[2px] pl-[6px]">
                  <div className="h-[23px] overflow-hidden whitespace-pre">{text}</div>
                </td>
                <td className="border-r border-b border-[#ccc] py-0 pr-0 pl-[6px] text-[16px] leading-[22px] whitespace-nowrap">{PATH}</td>
                <td className="border-b border-[#ccc] py-0 pr-1 pl-[6px] text-[16px] leading-[22px]">
                  <div className="h-[23px] overflow-hidden whitespace-nowrap">Friday, February 28, 2020 {time} PM</div>
                </td>
              </tr>
            ))}
          </tbody>
        </table>
      </div>
      <div className="w-[29px] shrink-0" />
    </div>
  </section>
);

/* ---------- bottom bars ---------- */

const StatusBar = () => (
  <footer className="flex h-[26px] shrink-0 items-center justify-end bg-[#0078cc] pr-[9px] text-[16px] text-[#e3f1fc]">
    <svg viewBox="0 0 20 18" className="h-[18px] w-5">
      <path d="M1 4h17v10h-9l-3 4v-4H1z" fill="#f0c43a" />
      <path d="M10 0l7 13H3z" fill="#d4281f" stroke="#fff" strokeWidth=".8" />
      <path d="M10 4v5M10 10v2" stroke="#fff" strokeWidth="1.6" />
    </svg>
    <span className="ml-[2px] w-[120px]">12 Messages</span>
    <span className="w-[120px]">No Selection</span>
    <svg viewBox="0 0 10 7" className="mr-[7px] h-[6px] w-[10px]" fill="#fff">
      <path d="M5 0l5 7H0z" />
    </svg>
    <span className="w-[239px] whitespace-nowrap">Metric (mm, kg, N, s, mV, mA)</span>
    <span>Degrees</span>
  </footer>
);

const taskIcons: { name: string; art: React.ReactNode }[] = [
  {
    name: 'File Explorer',
    art: (
      <>
        <path d="M1 1h12l3 3h13v18H1z" fill="#e9a825" />
        <path d="M1 6h28v16H1z" fill="#fbd667" />
        <path d="M6 14h18v8H6z" fill="#3c83c4" />
      </>
    ),
  },
  {
    name: 'Browser',
    art: (
      <>
        <circle cx="15" cy="15" r="15" fill="#e8457c" />
        <path d="M15 15L2 8A15 15 0 0 1 15 0z" fill="#c04be0" />
        <path d="M15 15V0a15 15 0 0 1 13 8z" fill="#f2483c" />
        <path d="M15 15l13-7a15 15 0 0 1 0 14z" fill="#f7a823" />
        <path d="M15 15L2 22A15 15 0 0 1 2 8z" fill="#2f9df0" />
        <path d="M15 15l13 7H2z" fill="#55c43b" />
        <circle cx="15" cy="15" r="5" fill="#fff" />
      </>
    ),
  },
  {
    name: 'Outlook',
    art: (
      <>
        <path d="M14 5h15v17H14z" fill="#f4f8fc" stroke="#0a64ad" />
        <path d="M14 6l8 8 7-8" fill="none" stroke="#0a64ad" strokeWidth="1.6" />
        <path d="M1 3l16-3v22H1z" fill="#0a6fc2" />
        <ellipse cx="9" cy="14" rx="4" ry="5" fill="none" stroke="#fff" strokeWidth="2.200" />
      </>
    ),
  },
  {
    name: 'WeChat',
    art: (
      <>
        <ellipse cx="12" cy="11" rx="12" ry="10" fill="#7fc84a" />
        <ellipse cx="21" cy="17" rx="9" ry="8" fill="#f1f1f1" />
        <path d="M8 7v3m8-3v3" stroke="#24402a" strokeWidth="2.600" />
        <path d="M18 14v2m6-2v2" stroke="#444" strokeWidth="2" />
      </>
    ),
  },
];

const TaskBar = () => (
  <nav className="flex h-[30px] shrink-0 items-end overflow-hidden bg-linear-to-r from-[#20373d] via-[#20343f] to-[#192746] pl-[12px] text-white">
    {taskIcons.map(({ name, art }) => (
      <button key={name} type="button" aria-label={name} className="w-[62px] shrink-0">
        <svg viewBox="0 0 30 18" className="h-[18px] w-[30px]">{art}</svg>
      </button>
    ))}
    <button type="button" className="mr-[33px] flex h-5 w-[30px] justify-center overflow-hidden bg-linear-to-br from-[#8a8a8a] to-[#b0b0b0] pt-[3px] text-[15px] leading-5 font-bold">
      WB
    </button>
    <button type="button" aria-label="PowerPoint" className="mr-[19px] flex h-[19px] w-[27px] bg-[#d24625] pl-[5px] text-[14px] leading-[22px] font-bold">
      P
      <i className="mt-1 ml-1 flex-1 bg-[#f6e6e0]" />
    </button>
    <button type="button" className="flex h-full w-[61px] items-end justify-center bg-[#4b5c68]">
      <span className="flex h-5 w-[30px] justify-center overflow-hidden bg-[#5f2c80] pt-1 text-[15px] leading-5 font-bold">M</span>
    </button>
    <div className="ml-auto flex items-end gap-[13px]">
      <svg viewBox="0 0 14 12" className="h-3 w-[14px]" fill="none" stroke="#fff" strokeWidth="1.4"><path d="M1 10l6-7 6 7" /></svg>
      <svg viewBox="0 0 18 16" className="h-4 w-[18px]" fill="#fff"><path d="M5 1h8v9h3v6H2v-6h3z" /></svg>
      <svg viewBox="0 0 22 16" className="h-4 w-[22px]"><path d="M7 4h13v12H5z" fill="#fff" /><path d="M2 1v4m4-4v4M1 5h6v4H4v6" stroke="#fff" fill="none" strokeWidth="1.4" /></svg>
      <svg viewBox="0 0 16 16" className="size-4" fill="none" stroke="#fff" strokeWidth="1.4"><path d="M1 14C2 7 7 3 14 2M5 15c1-5 4-8 10-9M9 16c1-3 3-5 6-6" /></svg>
      <svg viewBox="0 0 18 16" className="h-4 w-[18px]" fill="none" stroke="#fff" strokeWidth="1.3"><path d="M1 6h3l4-4v14l-4-4H1zM11 6c1 1 1 5 0 6M13 4c3 3 3 7 0 10M15 2c4 4 4 8 1 13" /></svg>
      <span className='h-[18px] overflow-hidden font-["Noto_Sans_CJK_SC",sans-serif] text-[16px] leading-[20px]'>中</span>
      <span className="mr-[28px] ml-[3px] h-[16px] w-5 overflow-hidden bg-[#1c95e0] text-center text-[15px] leading-[19px] font-bold italic">du</span>
      <span className="mr-[-5px] h-[27px] text-[14px] leading-[16px]">1</span>
    </div>
  </nav>
);

/* ---------- watermark ---------- */

const marks = [
  'left-[192px] top-[34px]',
  'left-[1212px] top-[-32px]',
  'left-[650px] top-[224px]',
  'left-[137px] top-[506px]',
  'left-[1206px] top-[438px]',
  'left-[700px] top-[708px]',
  'left-[1590px] top-[662px]',
];

const Watermark = () => (
  <div aria-hidden="true" className="pointer-events-none absolute inset-0 overflow-hidden select-none">
    {marks.map((place) => (
      <div key={place} className={clsx('absolute w-[400px] -rotate-[29deg] text-center whitespace-nowrap text-[#4a5070]/6', place)}>
        <p className='font-["Noto_Sans_CJK_TC",sans-serif] text-[92px] leading-[92px] font-black'>安世亞太</p>
        <p className='font-["DejaVu_Sans",sans-serif] text-[48px] leading-[44px]'>PERA GLOBAL</p>
      </div>
    ))}
  </div>
);

export default function App() {
  return (
    <div className={clsx('relative flex h-screen w-full flex-col overflow-hidden bg-[#efeff2]', UI_FONT)}>
      <TabStrip />
      <Ribbon />
      <main className="flex min-h-0 flex-1">
        <aside className="flex w-[330px] shrink-0 flex-col">
          <OutlinePanel />
          <DetailsPanel />
        </aside>
        <div className="ml-[6px] flex min-w-0 flex-1 flex-col">
          <div className="flex min-h-0 flex-1 gap-[6px]">
            <section className="flex min-w-0 flex-1 flex-col">
              <GraphicsToolbar />
              <MainView />
            </section>
            <section className="flex w-[552px] shrink-0 flex-col">
              <PanelHeader title="Contact Body View" />
              <ContactBodyView />
              <PanelHeader title="Target Body View" />
              <TargetBodyView />
            </section>
          </div>
          <MessagesPanel />
        </div>
      </main>
      <StatusBar />
      <TaskBar />
      <Watermark />
    </div>
  );
}
